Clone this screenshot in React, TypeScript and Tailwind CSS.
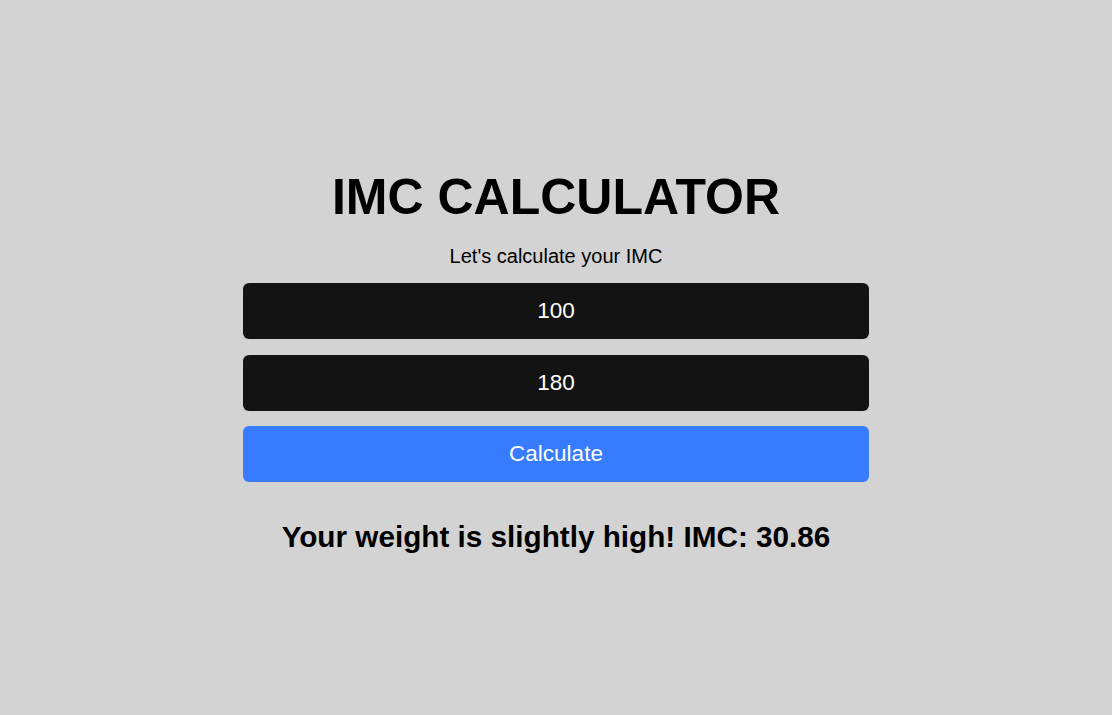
import React, { useState } from 'react';

const App: React.FC = () => {
  const [weight, setWeight] = useState('100');
  const [height, setHeight] = useState('180');
  const [result, setResult] = useState('Your weight is slightly high! IMC: 30.86');

  // calcul de l'IMC
  const calculate = () => {
    const w = parseFloat(weight);
    const h = parseFloat(height) / 100;
    if (!w || !h) return;
    const imc = w / (h * h);
    let msg = 'Your weight is normal!';
    if (imc < 18.5) msg = 'Your weight is low!';
    else if (imc >= 25) msg = 'Your weight is slightly high!';
    setResult(`${msg} IMC: ${imc.toFixed(2)}`);
  };

  return (
    <div className="min-h-screen bg-[#d3d3d3] flex justify-center pt-[168px] font-['Liberation_Sans',Arial,sans-serif] text-black">
      <div className="w-[626px] flex flex-col items-center">
        <h1 className="text-[50px] leading-[58px] font-bold">IMC CALCULATOR</h1>
        <p className="mt-[19px] text-[20px] leading-[23px]">Let's calculate your IMC</p>
        <input
          value={weight}
          onChange={e => setWeight(e.target.value)}
          className="mt-[15px] w-full h-[56px] rounded-md bg-[#131313] text-white text-center text-[22.5px] outline-none"
        />
        <input
          value={height}
          onChange={e => setHeight(e.target.value)}
          className="mt-4 w-full h-[56px] rounded-md bg-[#131313] text-white text-center text-[22.5px] outline-none"
        />
        <button
          onClick={calculate}
          className="mt-[15px] w-full h-[56px] rounded-md bg-[#377bff] text-white text-[22.5px]"
        >
          Calculate
        </button>
        <p className="mt-[38px] text-[29.7px] leading-[34px] font-bold">{result}</p>
      </div>
    </div>
  );
};

export default App;
